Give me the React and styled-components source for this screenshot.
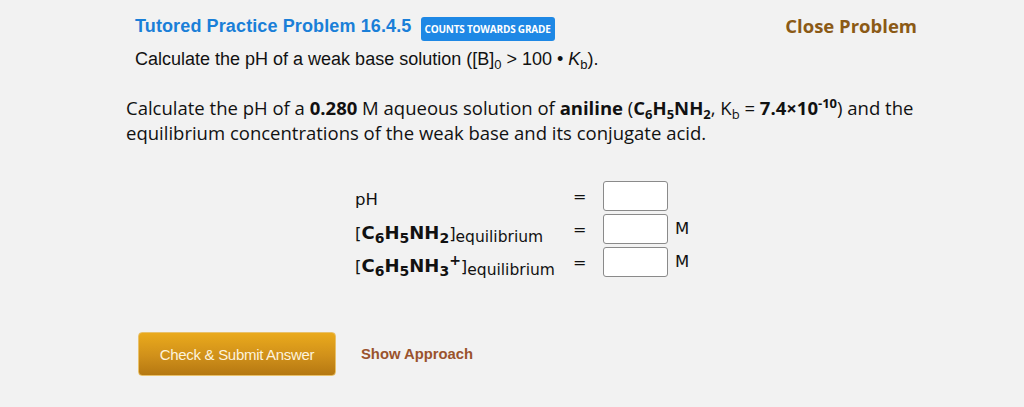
import React from 'react';
import styled, { createGlobalStyle } from 'styled-components';

const GlobalStyle = createGlobalStyle`
  html, body {
    margin: 0;
    padding: 0;
    background: #f2f2f2;
  }
  body {
    width: 1024px;
    height: 407px;
    overflow: hidden;
  }
`

const Page = styled.div`
  width: 1024px;
  height: 407px;
  background: #f2f2f2;
  box-sizing: border-box;
  padding: 14px 0 0 126px;
`

const Header = styled.div`
  display: flex;
  justify-content: space-between;
  align-items: flex-start;
  padding-left: 9px;
  width: 782px;
`

const TitleRow = styled.div`
  display: flex;
  align-items: flex-start;
  gap: 9px;
`

const Title = styled.h1`
  margin: 0;
  font-family: "Liberation Sans", Arial, sans-serif;
  font-weight: bold;
  font-size: 18px;
  letter-spacing: 0.12px;
  color: #1a7fd8;
  line-height: 24px;
`

const Badge = styled.span`
  display: inline-flex;
  align-items: center;
  height: 24px;
  margin-top: 3px;
  padding: 0 4px;
  border-radius: 3px;
  background: #1e88e5;
  color: #fff;
  font-family: "Open Sans", sans-serif;
  font-weight: 700;
  font-size: 10px;
  letter-spacing: -0.2px;
`

const CloseLink = styled.a`
  font-family: "Open Sans", sans-serif;
  font-weight: 700;
  font-size: 18.5px;
  color: #8b5a16;
  line-height: 24px;
  cursor: pointer;
`

const Subtitle = styled.p`
  margin: 7px 0 0 9px;
  font-family: "Liberation Sans", Arial, sans-serif;
  font-size: 18px;
  line-height: 22px;
  color: #111;

  sub { font-size: 13px; vertical-align: -4px; line-height: 0; }
  i { font-style: italic; }
`

const Question = styled.p`
  margin: 25px 0 0 0;
  width: 800px;
  font-family: "Open Sans", sans-serif;
  font-size: 18.5px;
  line-height: 25px;
  color: #111;

  b { font-weight: 700; }
  sub { font-size: 13px; vertical-align: -4px; line-height: 0; }
  sup { font-size: 13px; vertical-align: 7px; line-height: 0; }
`

const AnswerGrid = styled.div`
  display: grid;
  grid-template-columns: 218px 30px 65px auto;
  grid-auto-rows: 30px;
  row-gap: 3px;
  align-items: start;
  margin: 36px 0 0 229px;
`

const Label = styled.div`
  font-family: "DejaVu Sans", Verdana, sans-serif;
  font-size: 16.5px;
  line-height: 30px;
  padding-top: 4px;
  color: #111;
  white-space: nowrap;

  b { font-weight: 700; font-size: 18px; }
  sub.chem { font-size: 14px; vertical-align: -4px; line-height: 0; }
  sup { font-size: 14px; vertical-align: 7px; line-height: 0; }
  sub.eq { font-size: 15.5px; vertical-align: -3px; line-height: 0; font-weight: 400; }
`

const Equals = styled.div`
  font-family: "DejaVu Sans", Verdana, sans-serif;
  font-size: 16px;
  line-height: 30px;
  padding-top: 1px;
  color: #111;
`

const AnswerInput = styled.input`
  box-sizing: border-box;
  width: 65px;
  height: 30px;
  border: 1px solid #8a8a8a;
  border-radius: 3px;
  background: #fff;
  margin: 0;
`

const Unit = styled.div`
  font-family: "DejaVu Sans", Verdana, sans-serif;
  font-size: 16.5px;
  line-height: 30px;
  color: #111;
  padding-left: 7px;
`

const Actions = styled.div`
  display: flex;
  align-items: center;
  gap: 25px;
  margin: 55px 0 0 12px;
`

const SubmitButton = styled.button`
  width: 198px;
  height: 44px;
  border: 1px solid #e9c16a;
  border-radius: 4px;
  background: linear-gradient(to bottom, #eaaa1c 0%, #d0901a 55%, #b57812 100%);
  color: #fdf3dc;
  font-family: "Liberation Sans", Arial, sans-serif;
  font-size: 15px;
  letter-spacing: -0.3px;
  cursor: pointer;
`

const ApproachLink = styled.a`
  font-family: "Liberation Sans", Arial, sans-serif;
  font-weight: bold;
  font-size: 14.8px;
  color: #9a532c;
  cursor: pointer;
`

export default function App() {
  return (
    <Page>
      <GlobalStyle />
      <Header>
        <TitleRow>
          <Title>Tutored Practice Problem 16.4.5</Title>
          <Badge>COUNTS TOWARDS GRADE</Badge>
        </TitleRow>
        <CloseLink>Close Problem</CloseLink>
      </Header>
      <Subtitle>
        Calculate the pH of a weak base solution ([B]<sub>0</sub> &gt; 100 • <i>K</i><sub>b</sub>).
      </Subtitle>
      <Question>
        Calculate the pH of a <b>0.280</b> M aqueous solution of <b>aniline</b> (<b>C<sub>6</sub>H<sub>5</sub>NH<sub>2</sub></b>, K<sub>b</sub> = <b>7.4×10<sup>-10</sup></b>) and the equilibrium concentrations of the weak base and its conjugate acid.
      </Question>
      <AnswerGrid>
        <Label>pH</Label>
        <Equals>=</Equals>
        <AnswerInput type="text" />
        <Unit />

        <Label>[<b>C<sub className="chem">6</sub>H<sub className="chem">5</sub>NH<sub className="chem">2</sub></b>]<sub className="eq">equilibrium</sub></Label>
        <Equals>=</Equals>
        <AnswerInput type="text" />
        <Unit>M</Unit>

        <Label>[<b>C<sub className="chem">6</sub>H<sub className="chem">5</sub>NH<sub className="chem">3</sub><sup>+</sup></b>]<sub className="eq">equilibrium</sub></Label>
        <Equals>=</Equals>
        <AnswerInput type="text" />
        <Unit>M</Unit>
      </AnswerGrid>
      <Actions>
        <SubmitButton>Check &amp; Submit Answer</SubmitButton>
        <ApproachLink>Show Approach</ApproachLink>
      </Actions>
    </Page>
  );
}
